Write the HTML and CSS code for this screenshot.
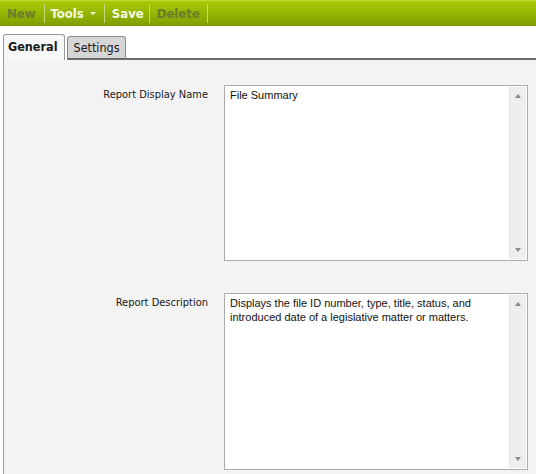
FILE: index.html
```html
<!DOCTYPE html>
<html>
<head>
<meta charset="utf-8">
<title>Report</title>
<link rel="stylesheet" href="styles.css">
</head>
<body>
<div class="toolbar">
  <span class="tb-item disabled">New</span>
  <span class="tb-item">Tools <span class="caret"></span></span>
  <span class="tb-item">Save</span>
  <span class="tb-item disabled">Delete</span>
</div>
<div class="tabs">
  <div class="tab active">General</div>
  <div class="tab">Settings</div>
  <div class="tab-fill"></div>
</div>
<div class="content">
  <div class="form">
    <div class="label">Report Display Name</div>
    <div class="box">
      <div class="box-text">File Summary</div>
      <div class="scroll"><span class="arr up"></span><span class="arr down"></span></div>
    </div>
    <div class="label">Report Description</div>
    <div class="box">
      <div class="box-text">Displays the file ID number, type, title, status, and introduced date of a legislative matter or matters.</div>
      <div class="scroll"><span class="arr up"></span><span class="arr down"></span></div>
    </div>
  </div>
</div>
</body>
</html>
```
FILE: styles.css
```css
html, body {
  margin: 0;
  padding: 0;
  background: #ffffff;
  height: 100%;
}
body {
  font-family: "DejaVu Sans Condensed", "DejaVu Sans", sans-serif;
  font-stretch: condensed;
  display: flex;
  flex-direction: column;
  overflow: hidden;
}
.toolbar {
  height: 26px;
  flex: none;
  display: flex;
  align-items: center;
  background: linear-gradient(#c4dc3a 0, #a6c604 2px, #98b902 45%, #7d9d00 100%);
}
.tb-item {
  height: 19px;
  line-height: 19px;
  padding: 0 7px 0 7px;
  border-right: 1px solid #c2d87a;
  font-size: 13px;
  font-weight: bold;
  color: #f6f9e4;
  display: flex;
  align-items: center;
}
.tb-item:first-child {
  padding-right: 8px;
}
.tb-item:nth-child(2) {
  padding-left: 6px;
}
.tb-item:nth-child(3) {
  padding-right: 5px;
}
.tb-item.disabled {
  color: #6b7c30;
}
.caret {
  display: inline-block;
  width: 0;
  height: 0;
  margin-left: 6px;
  margin-right: 1px;
  border-left: 3px solid transparent;
  border-right: 3px solid transparent;
  border-top: 3px solid #f6f9e4;
}
.tabs {
  display: flex;
  align-items: flex-end;
  height: 34px;
  padding-left: 3px;
  flex: none;
}
.tab {
  box-sizing: border-box;
  font-size: 12.5px;
  color: #1a1a1a;
  border: 1px solid #8c8c8c;
  border-bottom: none;
  border-radius: 3px 3px 0 0;
}
.tab.active {
  height: 26px;
  line-height: 24px;
  padding: 0 7px 0 4px;
  font-weight: bold;
  background: #f7f7f7;
  border-color: #9a9a9a;
}
.tab:not(.active) {
  height: 24px;
  line-height: 22px;
  margin-left: 2px;
  padding: 0 5px;
  background: #d6d6d6;
  border-bottom: 2px solid #6a6a6a;
}
.tab-fill {
  flex: 1;
  border-bottom: 2px solid #6a6a6a;
}
.content {
  flex: 1;
  margin-left: 3px;
  border-left: 1px solid #9a9a9a;
  background: #f3f3f3;
  padding-top: 25px;
}
.form {
  display: grid;
  grid-template-columns: 204px 304px;
  column-gap: 16px;
  row-gap: 32px;
}
.label {
  text-align: right;
  font-size: 11px;
  color: #1a1a1a;
  padding-top: 3px;
}
.box {
  box-sizing: border-box;
  height: 176px;
  border: 1px solid #ababab;
  background: #ffffff;
  display: flex;
  padding: 1px;
}
.box + .label + .box {
  height: 177px;
}
.box-text {
  flex: 1;
  font-family: "Liberation Sans", Arial, sans-serif;
  font-size: 11px;
  line-height: 14px;
  color: #111;
  padding: 1px 10px 0 4px;
}
.scroll {
  width: 16px;
  background: #eeeeee;
  border-left: 1px solid #e6e6e6;
  display: flex;
  flex-direction: column;
  justify-content: space-between;
  align-items: center;
  padding: 7px 0 7px;
}
.arr {
  width: 0;
  height: 0;
  border-left: 3px solid transparent;
  border-right: 3px solid transparent;
}
.arr.up {
  border-bottom: 4px solid #8a8a8a;
}
.arr.down {
  border-top: 4px solid #8a8a8a;
}
```
